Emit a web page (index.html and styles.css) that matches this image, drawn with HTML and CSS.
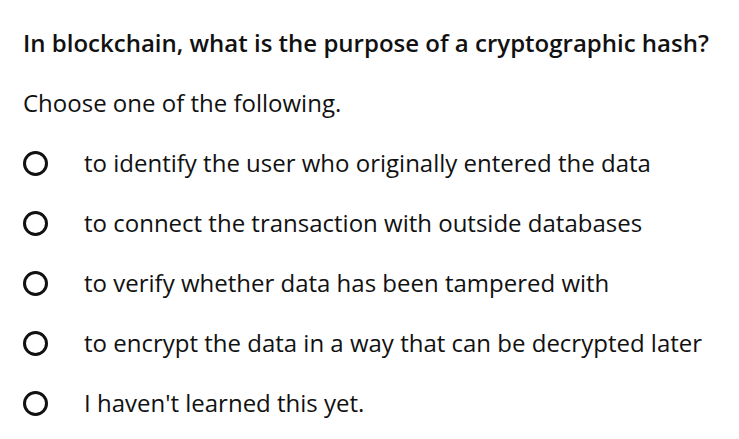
FILE: index.html
```html
<!DOCTYPE html>
<html>
<head>
<meta charset="utf-8">
<link rel="stylesheet" href="styles.css">
</head>
<body>
<div class="quiz">
  <h1 class="question">In blockchain, what is the purpose of a cryptographic hash?</h1>
  <p class="prompt">Choose one of the following.</p>
  <ul class="options">
    <li class="option"><span class="radio"></span><span class="label">to identify the user who originally entered the data</span></li>
    <li class="option"><span class="radio"></span><span class="label">to connect the transaction with outside databases</span></li>
    <li class="option"><span class="radio"></span><span class="label">to verify whether data has been tampered with</span></li>
    <li class="option"><span class="radio"></span><span class="label">to encrypt the data in a way that can be decrypted later</span></li>
    <li class="option"><span class="radio"></span><span class="label">I haven't learned this yet.</span></li>
  </ul>
</div>
</body>
</html>
```
FILE: styles.css
```css
html, body {
  margin: 0;
  padding: 0;
  background: #ffffff;
}
body {
  font-family: "Open Sans", "Liberation Sans", sans-serif;
  color: #111111;
}
.quiz {
  padding: 28px 0 0 23px;
}
.question {
  margin: 0;
  font-size: 24px;
  font-weight: 600;
  line-height: 30px;
}
.prompt {
  margin: 30px 0 0 0;
  font-size: 24px;
  font-weight: 400;
  line-height: 30px;
}
.options {
  list-style: none;
  margin: 30px 0 0 0;
  padding: 0;
  display: flex;
  flex-direction: column;
  gap: 30px;
}
.option {
  display: flex;
  align-items: center;
  height: 30px;
  font-size: 24px;
  line-height: 30px;
}
.radio {
  box-sizing: border-box;
  width: 25px;
  height: 25px;
  border: 3px solid #111111;
  border-radius: 50%;
  flex: none;
  margin-right: 36px;
}
```
